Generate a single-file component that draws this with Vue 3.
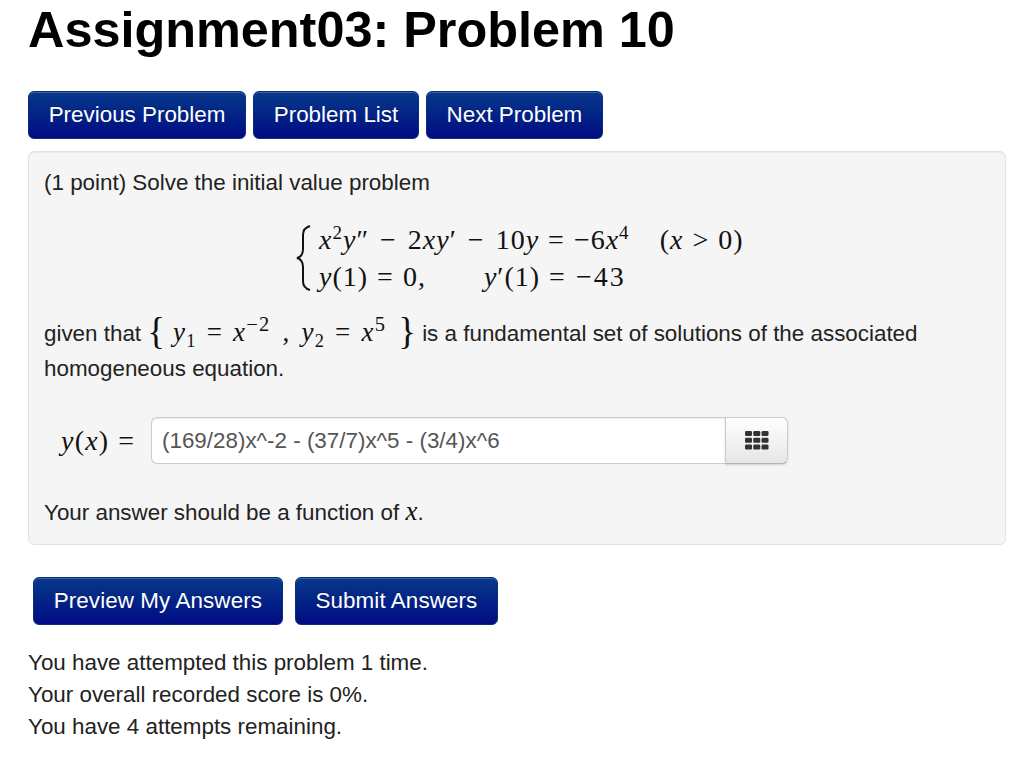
<script setup>
const icons = Array.from({ length: 9 }, (_, i) => ({
  x: (i % 3) * 8.25,
  y: Math.floor(i / 3) * 6.75,
}))
const navButtons = ['Previous Problem', 'Problem List', 'Next Problem']
const summary = [
  'You have attempted this problem 1 time.',
  'Your overall recorded score is 0%.',
  'You have 4 attempts remaining.',
]
</script>

<template>
  <main class="page">
    <h1 class="title">Assignment03: Problem 10</h1>

    <nav class="nav">
      <a v-for="label in navButtons" :key="label" class="btn">{{ label }}</a>
    </nav>

    <section class="well">
      <p class="intro">(1 point) Solve the initial value problem</p>

      <div class="display">
        <svg class="big-brace" width="15" height="66" viewBox="0 0 15 66">
          <path d="M14 1C8.5 2.5 7 5.500 7 10V24C7 29 5 32 1 33C5 34 7 37 7 42V56C7 60.500 8.500 63.500 14 65" fill="none" stroke="#111" stroke-width="2" />
        </svg>
        <div class="cases math">
          <div class="case"><i>x</i><sup>2</sup><i>y</i>″<span class="op">−</span>2<i>xy</i>′<span class="op">−</span>10<i>y</i><span class="rel">=</span>−6<i>x</i><sup>4</sup><span class="cond">(<i>x</i><span class="rel">&gt;</span>0)</span></div>
          <div class="case"><i>y</i>(1)<span class="rel">=</span>0,<span class="wide"></span><i>y</i>′(1)<span class="rel">=</span><span class="tail">−43</span></div>
        </div>
      </div>

      <p class="given">given that <span class="math inline"><span class="curly">{</span><i>y</i><sub>1</sub><span class="rel">=</span><i>x</i><sup>−2</sup><span class="comma">,</span><i>y</i><sub>2</sub><span class="rel">=</span><i>x</i><sup>5</sup><span class="curly end">}</span></span> is a fundamental set of solutions of the associated homogeneous equation.</p>

      <div class="answer">
        <span class="math label"><i>y</i>(<i>x</i>)<span class="rel">=</span></span>
        <div class="field">
          <input class="input" value="(169/28)x^-2 - (37/7)x^5 - (3/4)x^6" readonly />
          <button class="grid-btn" type="button" aria-label="Equation editor">
            <svg width="24" height="19" viewBox="0 0 24 19">
              <rect v-for="(r, i) in icons" :key="i" :x="r.x" :y="r.y" width="7" height="5" rx="1.2" fill="#333" />
            </svg>
          </button>
        </div>
      </div>

      <p class="hint">Your answer should be a function of <i class="math">x</i>.</p>
    </section>

    <div class="actions">
      <a class="btn">Preview My Answers</a>
      <a class="btn">Submit Answers</a>
    </div>

    <div class="summary">
      <div v-for="line in summary" :key="line">{{ line }}</div>
    </div>
  </main>
</template>

<style>
body { background: #fff; }
</style>

<style scoped>
.page {
  box-sizing: border-box;
  width: 1024px;
  height: 780px;
  padding: 0 18px 0 28px;
  font-family: "Liberation Sans", Arial, sans-serif;
  font-size: 22.4px;
  color: #333;
  overflow: hidden;
}
.title {
  margin: 0;
  font-size: 50.4px;
  line-height: 60px;
  font-weight: 700;
  color: #000;
}
.nav {
  display: flex;
  gap: 7px;
  margin-top: 31px;
}
.btn {
  box-sizing: border-box;
  display: flex;
  align-items: center;
  height: 48px;
  padding: 0 19.7px;
  border: 1px solid #0b2f76;
  border-radius: 6px;
  background: linear-gradient(#06398b, #000c82);
  color: #fff;
  white-space: nowrap;
  text-shadow: 0 -1px 0 rgba(0, 0, 0, 0.25);
  box-shadow: inset 0 1px 0 rgba(255, 255, 255, 0.2);
}
.well {
  box-sizing: border-box;
  height: 394px;
  margin-top: 12px;
  padding: 15px;
  background: #f5f5f5;
  border: 1px solid #e3e3e3;
  border-radius: 6px;
  box-shadow: inset 0 1px 1px rgba(0, 0, 0, 0.05);
}
.intro, .given, .hint { margin: 0; line-height: 32px; color: #222; }
.math { font-family: "Liberation Serif", "Times New Roman", serif; color: #111; }
.math sup, .math sub { font-size: 0.68em; line-height: 0; }
.display {
  display: flex;
  align-items: center;
  gap: 8px;
  margin: 22px 0 0 252px;
  height: 74px;
}
.big-brace { flex: none; }
.cases { font-size: 28px; line-height: 37px; letter-spacing: 1px; white-space: nowrap; }
.op { margin: 0 11px; }
.rel { margin: 0 9px; }
.cond { margin-left: 30px; }
.wide { display: inline-block; width: 58px; }
.tail { margin-left: 1px; letter-spacing: 2px; }
.given { margin-top: 16px; }
.inline { font-size: 27px; letter-spacing: 1.2px; white-space: nowrap; }
.inline sup { font-size: 0.76em; vertical-align: 0.5em; }
.curly { font-size: 37px; margin-right: 8px; vertical-align: -3px; line-height: 42px; letter-spacing: 0; }
.curly.end { margin: 0 0 0 12px; }
.inline .rel { margin: 0 10px; }
.comma { margin: 0 11px 0 12px; }
.answer {
  display: flex;
  align-items: center;
  margin-top: 32px;
  margin-left: 15px;
}
.label { flex: none; width: 92px; padding-left: 2px; box-sizing: border-box; font-size: 28px; letter-spacing: 1.2px; white-space: nowrap; }
.field { display: flex; height: 47px; }
.input {
  box-sizing: border-box;
  width: 574px;
  height: 47px;
  padding: 0 10px;
  border: 1px solid #ccc;
  border-right: 0;
  border-radius: 6px 0 0 6px;
  background: #fff;
  color: #555;
  font: inherit;
  outline: none;
  box-shadow: inset 0 1px 1px rgba(0, 0, 0, 0.08);
}
.grid-btn {
  box-sizing: border-box;
  display: flex;
  align-items: center;
  justify-content: center;
  width: 63px;
  height: 47px;
  padding: 0;
  border: 1px solid #ccc;
  border-bottom-color: #b3b3b3;
  border-radius: 0 6px 6px 0;
  background: linear-gradient(#fff, #e6e6e6);
  box-shadow: 0 1px 2px rgba(0, 0, 0, 0.15);
}
.hint { margin-top: 33px; }
.hint .math { font-size: 27px; line-height: 0; }
.actions {
  display: flex;
  gap: 12px;
  margin: 32px 0 0 5px;
}
.actions .btn { letter-spacing: 0.1px; }
.summary {
  margin-top: 22px;
  line-height: 32px;
  color: #222;
}
</style>
